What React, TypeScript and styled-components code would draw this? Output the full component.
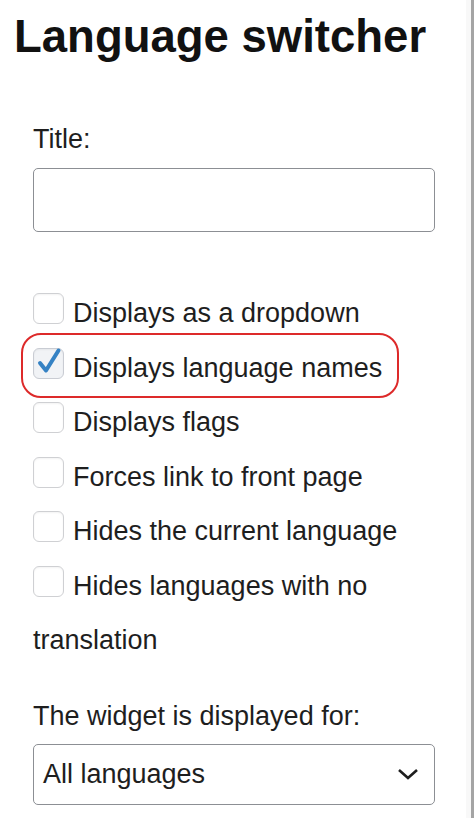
import React from "react";
import styled, { createGlobalStyle } from "styled-components";

const Global = createGlobalStyle`
  html, body { margin: 0; padding: 0; background: #fff; }
  body { font-family: "Liberation Sans", Arial, sans-serif; color: #1e1e1e; }
`;

const Panel = styled.div`
  box-sizing: border-box;
  width: 474px;
  min-height: 818px;
  padding-top: 14px;
  border-right: 3px solid #a4a4a4;
  box-shadow: inset -5px 0 0 #f8f8f8;
`;

const Heading = styled.h2`
  margin: 0 0 0 14px;
  font-size: 45.5px;
  line-height: 45px;
  font-weight: 700;
  letter-spacing: 0;
  color: #111;
`;

const Form = styled.div`
  padding: 0 36px 0 33px;
`;

const FieldLabel = styled.div<{ $top: number }>`
  margin-top: ${(p) => p.$top}px;
  font-size: 27px;
  line-height: 27px;
`;

const TextInput = styled.div`
  box-sizing: border-box;
  margin-top: 15px;
  height: 64px;
  border: 1.5px solid #8c8f94;
  border-radius: 5px;
  background: #fff;
`;

const Options = styled.div`
  margin-top: 54px;
`;

const Row = styled.label`
  position: relative;
  display: block;
  font-size: 27px;
  line-height: 54.5px;
`;

const Box = styled.span<{ $checked?: boolean }>`
  position: relative;
  box-sizing: border-box;
  display: inline-block;
  width: 31px;
  height: 31px;
  margin-right: 9px;
  vertical-align: -2px;
  border: 1.5px solid ${(p) => (p.$checked ? "#c9ccd3" : "#cfd0d3")};
  border-radius: 6px;
  background: ${(p) => (p.$checked ? "#f1f3f6" : "#fff")};
  box-shadow: inset 0 1px 2px rgba(0, 0, 0, 0.05);

  svg {
    position: absolute;
    left: -1.5px;
    top: -1.5px;
  }
`;

const Highlight = styled.span`
  position: absolute;
  left: -12px;
  top: -8px;
  width: 378px;
  height: 65px;
  box-sizing: border-box;
  border: 2px solid #dd2a2a;
  border-radius: 20px;
  pointer-events: none;
`;

const Select = styled.div`
  box-sizing: border-box;
  margin-top: 14px;
  height: 61px;
  display: flex;
  align-items: center;
  justify-content: space-between;
  padding: 0 15px 0 9px;
  border: 1.5px solid #8c8f94;
  border-radius: 5px;
  font-size: 27px;
  line-height: 27px;
`;

const Check = () => (
  <svg width="31" height="31" viewBox="0 0 31 31" aria-hidden>
    <path d="M7 16 L13 23.5 L25.5 3.5" fill="none" stroke="#3582c4" strokeWidth="4" strokeLinecap="round" strokeLinejoin="round" />
  </svg>
);

const Chevron = () => (
  <svg width="22" height="12" viewBox="0 0 22 12" aria-hidden>
    <path d="M2 2 L11 10 L20 2" fill="none" stroke="#1e1e1e" strokeWidth="2.6" />
  </svg>
);

const options = [
  { label: "Displays as a dropdown" },
  { label: "Displays language names", checked: true, highlight: true },
  { label: "Displays flags" },
  { label: "Forces link to front page" },
  { label: "Hides the current language" },
  { label: "Hides languages with no translation" },
];

export default function App() {
  return (
    <>
      <Global />
      <Panel>
        <Heading>Language switcher</Heading>
        <Form>
          <FieldLabel $top={67}>Title:</FieldLabel>
          <TextInput />
          <Options>
            {options.map((o) => (
              <Row key={o.label}>
                {o.highlight && <Highlight />}
                <Box $checked={o.checked}>{o.checked && <Check />}</Box>
                {o.label}
              </Row>
            ))}
          </Options>
          <FieldLabel $top={35}>The widget is displayed for:</FieldLabel>
          <Select>
            <span>All languages</span>
            <Chevron />
          </Select>
        </Form>
      </Panel>
    </>
  );
}
